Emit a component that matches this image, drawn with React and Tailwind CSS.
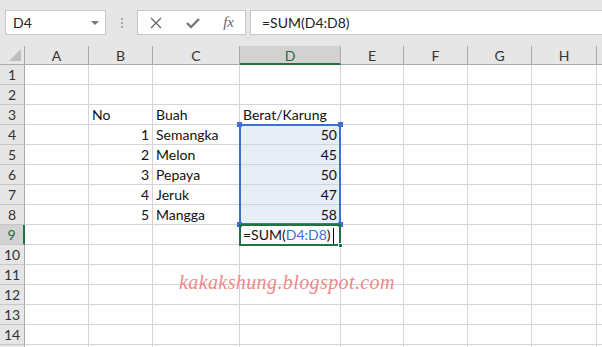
import React from 'react';

const cols = ['A', 'B', 'C', 'D', 'E', 'F', 'G', 'H', ''];

const data = {
  3: { B: { t: 'No' }, C: { t: 'Buah' }, D: { t: 'Berat/Karung' } },
  4: { B: { t: '1', r: true }, C: { t: 'Semangka' }, D: { t: '50', r: true } },
  5: { B: { t: '2', r: true }, C: { t: 'Melon' }, D: { t: '45', r: true } },
  6: { B: { t: '3', r: true }, C: { t: 'Pepaya' }, D: { t: '50', r: true } },
  7: { B: { t: '4', r: true }, C: { t: 'Jeruk' }, D: { t: '47', r: true } },
  8: { B: { t: '5', r: true }, C: { t: 'Mangga' }, D: { t: '58', r: true } },
};

function Cell({ row, col }) {
  const cell = data[row]?.[col];
  const inRange = col === 'D' && row >= 4 && row <= 8;
  return (
    <div
      className={`h-[20px] border-r border-b border-[#d4d4d4] px-[3px] leading-[20px] whitespace-nowrap overflow-visible text-[#111] ${
        inRange ? 'bg-[#e8eef8]' : 'bg-white'
      } ${cell?.r ? 'text-right' : 'text-left'}`}
    >
      {cell?.t}
      {row === 9 && col === 'D' && (
        <span>
          =SUM(<span className="text-[#3f6fd0]">D4:D8</span>)
          <span className="inline-block w-[1px] h-[16px] bg-black align-middle ml-[2px]" />
        </span>
      )}
    </div>
  );
}

export default function App() {
  const rows = Array.from({ length: 15 }, (_, i) => i + 1);
  return (
    <div
      className="w-[602px] h-[347px] overflow-hidden bg-white relative text-[14px]"
      style={{ fontFamily: 'Lato, "Liberation Sans", sans-serif' }}
    >
      {/* toolbar */}
      <div className="flex h-[46px] bg-[#e6e6e6] pt-[10px] pl-[5px]">
        <div className="w-[101px] h-[25px] border border-[#c6c6c6] bg-white flex items-center justify-between pl-[7px] pr-[6px] text-[#222]">
          <span>D4</span>
          <span className="w-0 h-0 border-l-[4px] border-r-[4px] border-t-[4px] border-l-transparent border-r-transparent border-t-[#777]" />
        </div>
        <div className="w-[31px] h-[25px] flex flex-col items-center justify-center gap-[2px]">
          <span className="w-[2px] h-[2px] bg-[#a8a8a8]" />
          <span className="w-[2px] h-[2px] bg-[#a8a8a8]" />
          <span className="w-[2px] h-[2px] bg-[#a8a8a8]" />
        </div>
        <div className="w-[109px] h-[25px] border border-[#c6c6c6] bg-white flex items-center justify-between pl-[12px] pr-[11px]">
          <svg width="12" height="12" viewBox="0 0 12 12">
            <path d="M1 1 L11 11 M11 1 L1 11" stroke="#666" strokeWidth="1.3" fill="none" />
          </svg>
          <svg width="14" height="12" viewBox="0 0 14 12">
            <path d="M1 6 L5 10 L13 2" stroke="#777" strokeWidth="2.4" fill="none" />
          </svg>
          <span className="text-[#666] italic text-[15px] leading-none" style={{ fontFamily: '"Liberation Serif", serif' }}>
            fx
          </span>
        </div>
        <div className="flex-1 ml-[4px] h-[25px] border border-r-0 border-[#c6c6c6] bg-white flex items-center pl-[11px] text-[#222]">
          =SUM(D4:D8)
        </div>
      </div>

      {/* sheet */}
      <div className="grid grid-cols-[25px_64px_64px_87px_101px_63px_64px_64px_65px_20px]">
        {/* header row */}
        <div className="h-[19px] bg-[#e6e6e6] border-r border-b border-[#ababab] flex items-end justify-end pr-[3px] pb-[3px]">
          <svg width="12" height="12" viewBox="0 0 12 12">
            <path d="M12 0 L12 12 L0 12 Z" fill="#bdbdbd" />
          </svg>
        </div>
        {cols.map((c, i) => (
          <div
            key={i}
            className={`h-[19px] text-center leading-[19px] ${
              c === 'D'
                ? 'bg-[#d2d2d2] border-r border-b-2 border-r-[#ababab] border-b-[#217346] text-[#1e6b40]'
                : 'bg-[#e6e6e6] border-r border-b border-[#ababab] text-[#333]'
            }`}
          >
            {c}
          </div>
        ))}

        {rows.map((r) => (
          <React.Fragment key={r}>
            <div
              className={`h-[20px] text-center leading-[20px] border-b border-[#c6c6c6] ${
                r === 9
                  ? 'bg-[#d2d2d2] border-r-2 border-r-[#217346] text-[#1e6b40]'
                  : 'bg-[#e6e6e6] border-r border-r-[#ababab] text-[#333]'
              }`}
            >
              {r < 15 ? r : ''}
            </div>
            {cols.map((c, i) => (
              <Cell key={i} row={r} col={c} />
            ))}
          </React.Fragment>
        ))}
      </div>

      {/* range reference highlight */}
      <div className="absolute left-[239px] top-[124px] w-[102px] h-[101px] border-2 border-[#3f6fd0]" />
      <div className="absolute left-[237px] top-[122px] w-[5px] h-[5px] bg-[#3f6fd0]" />
      <div className="absolute left-[338px] top-[122px] w-[5px] h-[5px] bg-[#3f6fd0]" />
      <div className="absolute left-[237px] top-[222px] w-[5px] h-[5px] bg-[#3f6fd0]" />
      <div className="absolute left-[338px] top-[222px] w-[5px] h-[5px] bg-[#3f6fd0]" />

      {/* active cell */}
      <div className="absolute left-[239px] top-[224px] w-[102px] h-[22px] border-2 border-[#217346]" />
      <div className="absolute left-[338px] top-[243px] w-[5px] h-[5px] bg-[#217346] border border-white" />

      {/* watermark */}
      <div
        className="absolute left-[179px] top-[267px] text-[20px] italic text-[#f08888] tracking-[0.4px]"
        style={{ fontFamily: '"Liberation Serif", serif' }}
      >
        kakakshung.blogspot.com
      </div>
    </div>
  );
}
